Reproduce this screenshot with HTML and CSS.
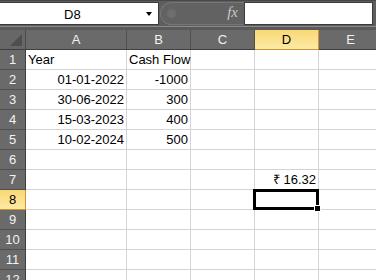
FILE: index.html
```html
<!DOCTYPE html>
<html>
<head>
<meta charset="utf-8">
<link rel="stylesheet" href="styles.css">
</head>
<body>
<div class="fbar">
  <div class="namebox"><span class="ref">D8</span><span class="caret"></span></div>
  <div class="pill"><span class="knob"></span></div>
  <div class="fx">fx</div>
  <div class="input"></div>
</div>
<div class="strip"></div>
<div class="sheet">
  <div class="corner"><span class="tri"></span></div>
  <div class="ch">A</div><div class="ch">B</div><div class="ch">C</div><div class="ch sel">D</div><div class="ch">E</div>

  <div class="rh">1</div><div class="c">Year</div><div class="c">Cash Flow</div><div class="c"></div><div class="c"></div><div class="c"></div>
  <div class="rh">2</div><div class="c r">01-01-2022</div><div class="c r">-1000</div><div class="c"></div><div class="c"></div><div class="c"></div>
  <div class="rh">3</div><div class="c r">30-06-2022</div><div class="c r">300</div><div class="c"></div><div class="c"></div><div class="c"></div>
  <div class="rh">4</div><div class="c r">15-03-2023</div><div class="c r">400</div><div class="c"></div><div class="c"></div><div class="c"></div>
  <div class="rh">5</div><div class="c r">10-02-2024</div><div class="c r">500</div><div class="c"></div><div class="c"></div><div class="c"></div>
  <div class="rh">6</div><div class="c"></div><div class="c"></div><div class="c"></div><div class="c"></div><div class="c"></div>
  <div class="rh">7</div><div class="c"></div><div class="c"></div><div class="c"></div><div class="c r">₹ 16.32</div><div class="c"></div>
  <div class="rh sel">8</div><div class="c"></div><div class="c"></div><div class="c"></div><div class="c active"><span class="handle"></span></div><div class="c"></div>
  <div class="rh">9</div><div class="c"></div><div class="c"></div><div class="c"></div><div class="c"></div><div class="c"></div>
  <div class="rh">10</div><div class="c"></div><div class="c"></div><div class="c"></div><div class="c"></div><div class="c"></div>
  <div class="rh">11</div><div class="c"></div><div class="c"></div><div class="c"></div><div class="c"></div><div class="c"></div>
  <div class="rh">12</div><div class="c"></div><div class="c"></div><div class="c"></div><div class="c"></div><div class="c"></div>
</div>
</body>
</html>
```
FILE: styles.css
```css
html, body {
  margin: 0;
  padding: 0;
  width: 376px;
  height: 280px;
  overflow: hidden;
  background: #ffffff;
  font-family: "Liberation Sans", Arial, sans-serif;
}
.fbar {
  height: 26px;
  background: #5e5e5e;
  display: flex;
  align-items: stretch;
  padding-top: 1px;
  box-sizing: border-box;
  border-top: 1px solid #474747;
}
.namebox {
  width: 159px;
  height: 23px;
  background: #fff;
  border: 1px solid #3a3a3a;
  border-left: none;
  box-sizing: border-box;
  position: relative;
  font-size: 13px;
  color: #000;
}
.ref {
  position: absolute;
  left: 64px;
  top: 4px;
}
.caret {
  position: absolute;
  left: 146px;
  top: 9px;
  border-left: 3.5px solid transparent;
  border-right: 3.5px solid transparent;
  border-top: 4px solid #000;
}
.pill {
  width: 40px;
  height: 23px;
  margin-left: 1px;
  background: #626262;
  border: 1px solid #767676;
  border-right: none;
  border-radius: 12px 0 0 12px;
  box-sizing: border-box;
  position: relative;
}
.knob {
  position: absolute;
  left: 5px;
  top: 5px;
  width: 11px;
  height: 11px;
  border-radius: 50%;
  background: #6e6e6e;
  box-shadow: inset 0 0 2px #555;
}
.fx {
  width: 44px;
  height: 23px;
  background: #626262;
  border-top: 1px solid #767676;
  border-bottom: 1px solid #767676;
  box-sizing: border-box;
  color: #c8c8c8;
  font-family: "Liberation Serif", serif;
  font-style: italic;
  font-size: 15px;
  text-align: right;
  padding-right: 6px;
  line-height: 19px;
}
.input {
  width: 129px;
  height: 23px;
  background: #fff;
  border: 1px solid #3a3a3a;
  box-sizing: border-box;
}
.strip {
  height: 4px;
  background: #5a5a5a;
  border-top: 1px solid #8a8a8a;
  box-sizing: border-box;
}
.sheet {
  display: grid;
  grid-template-columns: 26px 101px 64px 64px 64px 64px;
  grid-auto-rows: 20px;
  font-size: 13px;
}
.sheet > div {
  box-sizing: border-box;
}
.corner {
  background: #676767;
  border-right: 1px solid #4a4a4a;
  border-bottom: 1px solid #3f3f3f;
  position: relative;
}
.tri {
  position: absolute;
  right: 3px;
  bottom: 3px;
  border-left: 12px solid transparent;
  border-bottom: 12px solid #4e4e4e;
}
.ch {
  background: #6a6a6a;
  color: #f2f2f2;
  text-align: center;
  line-height: 19px;
  border-right: 1px solid #4f4f4f;
  border-bottom: 1px solid #3f3f3f;
}
.ch.sel, .rh.sel {
  background: linear-gradient(#f9d976, #fde9a3);
  color: #000;
  border-right: 1px solid #d3922e;
  border-bottom: 1px solid #d3922e;
}
.rh {
  background: #6a6a6a;
  color: #f2f2f2;
  text-align: center;
  line-height: 20px;
  border-right: 1px solid #3f3f3f;
  border-bottom: 1px solid #4f4f4f;
}
.c {
  border-right: 1px solid #d4d4d4;
  border-bottom: 1px solid #d4d4d4;
  line-height: 19px;
  padding: 0 2px 0 2px;
  white-space: nowrap;
  color: #000;
}
.c.r {
  text-align: right;
}
.active {
  position: relative;
}
.active::after {
  content: "";
  position: absolute;
  left: -2px;
  top: -1px;
  right: -1px;
  bottom: -1px;
  border: 2px solid #000;
  outline: 1px solid #000;
  outline-offset: -3px;
}
.handle {
  position: absolute;
  right: -3px;
  bottom: -3px;
  width: 5px;
  height: 5px;
  background: #000;
  border: 1px solid #fff;
  z-index: 2;
}
```
